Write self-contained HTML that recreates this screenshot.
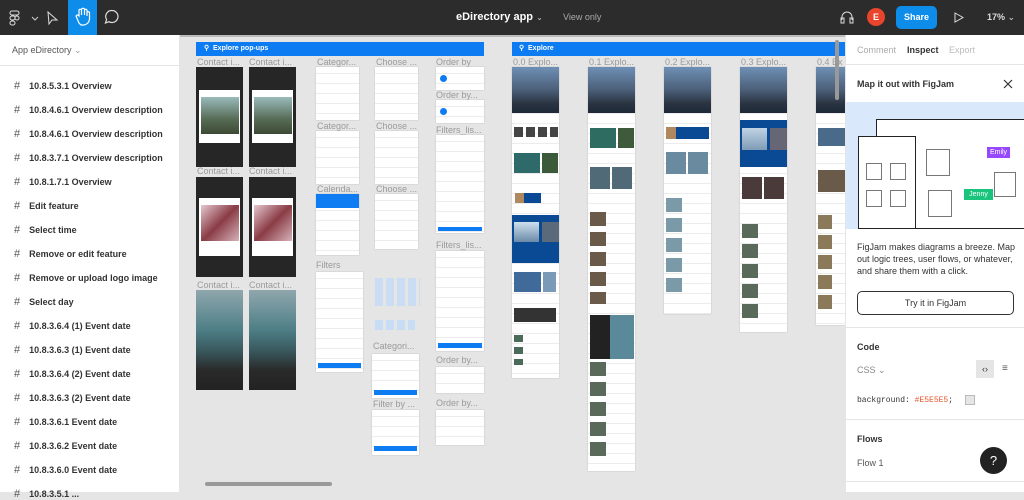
<!DOCTYPE html><html><head><meta charset="utf-8"><style>
*{margin:0;padding:0;box-sizing:border-box}
body{width:1024px;height:492px;overflow:hidden;font-family:"Liberation Sans",sans-serif;background:#e5e5e5;position:relative}
.a{position:absolute}
.top{left:0;top:0;width:1024px;height:35px;background:#2c2c2c}
.left{left:0;top:35px;width:180px;height:457px;background:#fff;border-right:1px solid #e5e5e5}
.right{left:845px;top:35px;width:179px;height:457px;background:#fff;border-left:1px solid #e5e5e5}
.li{position:absolute;left:14px;font-size:9px;color:#333;font-weight:bold}
.li span{color:#555;font-weight:normal;margin-right:9px;font-size:11px}
.lbl{position:absolute;font-size:9px;color:#9a9a9a;white-space:nowrap}
.fw{position:absolute;background:#fff repeating-linear-gradient(transparent 0 6px,#ececec 6px 7px,transparent 7px 10px);box-shadow:0 0 1px #aaa}
.fd{position:absolute;background:#262626}
.blue{background:#0d7cf2}
.img{position:absolute}
</style></head><body>
<div class="a top">
 <svg class="a" style="left:9px;top:10px" width="30" height="16"><rect x="1" y="1" width="9" height="4" rx="2" fill="none" stroke="#ddd"/><rect x="1" y="6" width="5" height="4" rx="2" fill="none" stroke="#ddd"/><rect x="1" y="11" width="5" height="4" rx="2" fill="none" stroke="#ddd"/><circle cx="8" cy="8" r="2" fill="none" stroke="#ddd"/><path d="M23 7l3 3 3-3" stroke="#ccc" fill="none"/></svg>
 <svg class="a" style="left:46px;top:11px" width="14" height="14"><path d="M2 1L11 9 6 9 3 13Z" fill="none" stroke="#ddd"/></svg>
 <div class="a" style="left:68px;top:0;width:29px;height:35px;background:#0d8ce9"></div>
 <svg class="a" style="left:74px;top:7px" width="18" height="20"><path d="M5 16 L2 9 Q3 7 5 9 V3 Q6 1.5 7.5 3 V8 V2 Q9 0.5 10.5 2 V8 V3 Q12 1.5 13 3 V9 V5 Q14.5 4 15.5 5.5 V12 Q15 17 10 18 H7Z" fill="none" stroke="#fff" stroke-width="1.2"/></svg>
 <svg class="a" style="left:104px;top:9px" width="16" height="16"><path d="M8 1.5a6 6 0 1 1-3 11.2L1.5 14 2.6 10.6A6 6 0 0 1 8 1.5z" fill="none" stroke="#ddd" stroke-width="1.2"/></svg>
 <div class="a" style="left:456px;top:11px;color:#fff;font-size:11px;font-weight:bold">eDirectory app <span style="font-weight:normal;font-size:8px;color:#ccc">⌄</span></div>
 <div class="a" style="left:563px;top:12px;color:#aaa;font-size:9px">View only</div>
 <svg class="a" style="left:840px;top:10px" width="14" height="14"><path d="M2 10V7a5 5 0 0 1 10 0v3" fill="none" stroke="#ddd"/><rect x="1" y="8" width="3" height="5" fill="none" stroke="#ddd"/><rect x="10" y="8" width="3" height="5" fill="none" stroke="#ddd"/></svg>
 <div class="a" style="left:867px;top:8px;width:18px;height:18px;border-radius:50%;background:#e8452c;color:#fff;font-size:9px;text-align:center;line-height:18px;font-weight:bold">E</div>
 <div class="a" style="left:896px;top:6px;width:41px;height:23px;border-radius:5px;background:#0d8ce9;color:#fff;font-size:9px;font-weight:bold;text-align:center;line-height:23px">Share</div>
 <svg class="a" style="left:954px;top:12px" width="10" height="11"><path d="M1 1L9 5.5 1 10Z" fill="none" stroke="#ddd"/></svg>
 <div class="a" style="left:987px;top:12px;color:#ddd;font-size:9px;font-weight:bold">17% <span style="font-weight:normal">⌄</span></div>
</div>
<div class="a left">
 <div class="a" style="left:12px;top:10px;font-size:9px;color:#555">App eDirectory <span style="color:#999">⌄</span></div>
 <div class="a" style="left:0;top:30px;width:180px;height:1px;background:#e5e5e5"></div>
 <div class="li" style="top:45px"><span>#</span>10.8.5.3.1 Overview</div>
 <div class="li" style="top:69px"><span>#</span>10.8.4.6.1 Overview description</div>
 <div class="li" style="top:93px"><span>#</span>10.8.4.6.1 Overview description</div>
 <div class="li" style="top:117px"><span>#</span>10.8.3.7.1 Overview description</div>
 <div class="li" style="top:141px"><span>#</span>10.8.1.7.1 Overview</div>
 <div class="li" style="top:165px"><span>#</span>Edit feature</div>
 <div class="li" style="top:189px"><span>#</span>Select time</div>
 <div class="li" style="top:213px"><span>#</span>Remove or edit feature</div>
 <div class="li" style="top:237px"><span>#</span>Remove or upload logo image</div>
 <div class="li" style="top:261px"><span>#</span>Select day</div>
 <div class="li" style="top:285px"><span>#</span>10.8.3.6.4 (1) Event date</div>
 <div class="li" style="top:309px"><span>#</span>10.8.3.6.3 (1) Event date</div>
 <div class="li" style="top:333px"><span>#</span>10.8.3.6.4 (2) Event date</div>
 <div class="li" style="top:357px"><span>#</span>10.8.3.6.3 (2) Event date</div>
 <div class="li" style="top:381px"><span>#</span>10.8.3.6.1 Event date</div>
 <div class="li" style="top:405px"><span>#</span>10.8.3.6.2 Event date</div>
 <div class="li" style="top:429px"><span>#</span>10.8.3.6.0 Event date</div>
 <div class="li" style="top:453px"><span>#</span>10.8.3.5.1 ...</div>
</div>

<div class="a" style="left:180px;top:35px;width:665px;height:2px;background:#bbb"></div>
<div class="a blue" style="left:196px;top:42px;width:288px;height:14px"></div>
<div class="a" style="left:204px;top:44px;font-size:7px;color:#fff;font-weight:bold">⚲ &nbsp;Explore pop-ups</div>
<div class="a blue" style="left:512px;top:42px;width:333px;height:14px"></div>
<div class="a" style="left:519px;top:44px;font-size:7px;color:#fff;font-weight:bold">⚲ &nbsp;Explore</div>

<div class="lbl" style="left:197px;top:57px">Contact i...</div><div class="lbl" style="left:249px;top:57px">Contact i...</div>
<div class="lbl" style="left:197px;top:166px">Contact i...</div><div class="lbl" style="left:249px;top:166px">Contact i...</div>
<div class="lbl" style="left:197px;top:280px">Contact i...</div><div class="lbl" style="left:249px;top:280px">Contact i...</div>
<div class="lbl" style="left:317px;top:57px">Categor...</div><div class="lbl" style="left:376px;top:57px">Choose ...</div><div class="lbl" style="left:436px;top:57px">Order by</div>
<div class="lbl" style="left:317px;top:121px">Categor...</div><div class="lbl" style="left:376px;top:121px">Choose ...</div><div class="lbl" style="left:436px;top:90px">Order by...</div>
<div class="lbl" style="left:317px;top:184px">Calenda...</div><div class="lbl" style="left:376px;top:184px">Choose ...</div><div class="lbl" style="left:436px;top:125px">Filters_lis...</div>
<div class="lbl" style="left:316px;top:260px">Filters</div><div class="lbl" style="left:436px;top:240px">Filters_lis...</div>
<div class="lbl" style="left:373px;top:341px">Categori...</div><div class="lbl" style="left:373px;top:399px">Filter by ...</div>
<div class="lbl" style="left:436px;top:355px">Order by...</div><div class="lbl" style="left:436px;top:398px">Order by...</div>
<div class="lbl" style="left:513px;top:57px">0.0 Explo...</div><div class="lbl" style="left:589px;top:57px">0.1 Explo...</div><div class="lbl" style="left:665px;top:57px">0.2 Explo...</div><div class="lbl" style="left:741px;top:57px">0.3 Explo...</div><div class="lbl" style="left:817px;top:57px">0.4 Ex</div>

<div class="fd" style="left:196px;top:67px;width:47px;height:100px"></div><div class="fd" style="left:249px;top:67px;width:47px;height:100px"></div>
<div class="a" style="left:199px;top:90px;width:41px;height:53px;background:#fff"></div><div class="a" style="left:252px;top:90px;width:41px;height:53px;background:#fff"></div>
<div class="img" style="left:201px;top:97px;width:38px;height:37px;background:linear-gradient(#9bb 0%,#576b55 60%,#3c4a35)"></div><div class="img" style="left:254px;top:97px;width:38px;height:37px;background:linear-gradient(#9bb 0%,#576b55 60%,#3c4a35)"></div>
<div class="fd" style="left:196px;top:177px;width:47px;height:100px"></div><div class="fd" style="left:249px;top:177px;width:47px;height:100px"></div>
<div class="a" style="left:199px;top:198px;width:41px;height:58px;background:#fff"></div><div class="a" style="left:252px;top:198px;width:41px;height:58px;background:#fff"></div>
<div class="img" style="left:201px;top:205px;width:38px;height:36px;background:linear-gradient(135deg,#e6c7cf,#8a3c45 50%,#d7b2ba)"></div><div class="img" style="left:254px;top:205px;width:38px;height:36px;background:linear-gradient(135deg,#e6c7cf,#8a3c45 50%,#d7b2ba)"></div>
<div class="img" style="left:196px;top:290px;width:47px;height:100px;background:linear-gradient(#8fa7ad,#4e7e86 40%,#3a5a5f 60%,#2a2a2a 80%,#222)"></div><div class="img" style="left:249px;top:290px;width:47px;height:100px;background:linear-gradient(#8fa7ad,#4e7e86 40%,#3a5a5f 60%,#2a2a2a 80%,#222)"></div>

<div class="fw" style="left:316px;top:67px;width:43px;height:53px"></div>
<div class="fw" style="left:316px;top:131px;width:43px;height:53px"></div>
<div class="fw" style="left:316px;top:194px;width:43px;height:61px"></div><div class="a blue" style="left:316px;top:194px;width:43px;height:14px"></div>
<div class="fw" style="left:316px;top:272px;width:47px;height:100px"></div><div class="a blue" style="left:318px;top:363px;width:43px;height:5px"></div>
<div class="fw" style="left:375px;top:67px;width:43px;height:53px"></div>
<div class="fw" style="left:375px;top:131px;width:43px;height:53px"></div>
<div class="fw" style="left:375px;top:194px;width:43px;height:55px"></div>
<div class="fw" style="left:436px;top:67px;width:48px;height:23px"></div><div class="a blue" style="left:440px;top:75px;width:7px;height:7px;border-radius:50%"></div>
<div class="fw" style="left:436px;top:100px;width:48px;height:23px"></div><div class="a blue" style="left:440px;top:108px;width:7px;height:7px;border-radius:50%"></div>
<div class="fw" style="left:436px;top:135px;width:48px;height:98px"></div><div class="a blue" style="left:438px;top:227px;width:44px;height:4px"></div>
<div class="fw" style="left:436px;top:251px;width:48px;height:100px"></div><div class="a blue" style="left:438px;top:343px;width:44px;height:5px"></div>
<div class="fw" style="left:436px;top:367px;width:48px;height:26px"></div>
<div class="fw" style="left:436px;top:410px;width:48px;height:35px"></div>
<div class="fw" style="left:372px;top:354px;width:47px;height:44px"></div><div class="a blue" style="left:374px;top:390px;width:43px;height:5px"></div>
<div class="fw" style="left:372px;top:410px;width:47px;height:45px"></div><div class="a blue" style="left:374px;top:446px;width:43px;height:5px"></div>
<div class="a" style="left:375px;top:278px;width:45px;height:28px;background:repeating-linear-gradient(90deg,#c7dcf5 0 8px,transparent 8px 11px);opacity:.9"></div>
<div class="a" style="left:375px;top:320px;width:40px;height:10px;background:repeating-linear-gradient(90deg,#c7dcf5 0 8px,transparent 8px 11px)"></div>

<div class="fw" style="left:512px;top:67px;width:47px;height:311px"></div>
<div class="fw" style="left:588px;top:67px;width:47px;height:404px"></div>
<div class="fw" style="left:664px;top:67px;width:47px;height:247px"></div>
<div class="fw" style="left:740px;top:67px;width:47px;height:265px"></div>
<div class="fw" style="left:816px;top:67px;width:29px;height:258px"></div>
<div class="img" style="left:512px;top:67px;width:47px;height:46px;background:linear-gradient(#6e8fb5,#4b5f78 50%,#2a3340 80%,#1d2a3a)"></div>
<div class="img" style="left:588px;top:67px;width:47px;height:46px;background:linear-gradient(#6e8fb5,#4b5f78 50%,#2a3340 80%,#1d2a3a)"></div>
<div class="img" style="left:664px;top:67px;width:47px;height:46px;background:linear-gradient(#6e8fb5,#4b5f78 50%,#2a3340 80%,#1d2a3a)"></div>
<div class="img" style="left:740px;top:67px;width:47px;height:46px;background:linear-gradient(#6e8fb5,#4b5f78 50%,#2a3340 80%,#1d2a3a)"></div>
<div class="img" style="left:816px;top:67px;width:29px;height:46px;background:linear-gradient(#6e8fb5,#4b5f78 50%,#2a3340 80%,#1d2a3a)"></div>
<div class="img" style="left:514px;top:127px;width:44px;height:10px;background:repeating-linear-gradient(90deg,#444 0 9px,transparent 9px 12px)"></div>
<div class="img" style="left:514px;top:153px;width:44px;height:20px;background:linear-gradient(90deg,#2f6a6a 0 26px,transparent 26px 28px,#3a5a3a 28px)"></div>
<div class="a" style="left:515px;top:193px;width:26px;height:10px;background:#0a4a94"></div><div class="img" style="left:515px;top:193px;width:9px;height:10px;background:#b08860"></div>
<div class="a" style="left:512px;top:215px;width:47px;height:48px;background:#0a4a94"></div>
<div class="img" style="left:514px;top:222px;width:25px;height:20px;background:linear-gradient(#cfe0ee,#6a8aa8)"></div><div class="img" style="left:542px;top:222px;width:17px;height:20px;background:#5a6a7a"></div>
<div class="img" style="left:514px;top:272px;width:42px;height:20px;background:linear-gradient(90deg,#3f6a9a 0 27px,transparent 27px 29px,#7a9ab8 29px)"></div>
<div class="img" style="left:514px;top:308px;width:42px;height:14px;background:#333"></div>
<div class="img" style="left:514px;top:335px;width:9px;height:30px;background:repeating-linear-gradient(#4a6a5a 0 7px,transparent 7px 12px)"></div>
<div class="img" style="left:590px;top:128px;width:44px;height:20px;background:linear-gradient(90deg,#2e6b60 0 26px,transparent 26px 28px,#3e5a3a 28px)"></div>
<div class="img" style="left:590px;top:167px;width:43px;height:22px;background:repeating-linear-gradient(90deg,#506a78 0 20px,transparent 20px 22px)"></div>
<div class="img" style="left:590px;top:212px;width:16px;height:92px;background:repeating-linear-gradient(#6a5a4a 0 14px,transparent 14px 20px)"></div>
<div class="img" style="left:590px;top:315px;width:44px;height:44px;background:linear-gradient(90deg,#222 0 20px,#5a8a9a 20px)"></div>
<div class="img" style="left:590px;top:362px;width:16px;height:96px;background:repeating-linear-gradient(#5a6a5a 0 14px,transparent 14px 20px)"></div>
<div class="img" style="left:666px;top:127px;width:43px;height:12px;background:linear-gradient(90deg,#b08860 0 10px,#0a4a94 10px)"></div>
<div class="img" style="left:666px;top:152px;width:43px;height:22px;background:repeating-linear-gradient(90deg,#6a8aa0 0 20px,transparent 20px 22px)"></div>
<div class="img" style="left:666px;top:198px;width:16px;height:100px;background:repeating-linear-gradient(#7a9aa8 0 14px,transparent 14px 20px)"></div>
<div class="a" style="left:740px;top:120px;width:47px;height:47px;background:#0a4a94"></div>
<div class="img" style="left:742px;top:128px;width:25px;height:22px;background:linear-gradient(#bfd3e3,#7f9bb5)"></div><div class="img" style="left:770px;top:128px;width:17px;height:22px;background:#667"></div>
<div class="img" style="left:742px;top:177px;width:43px;height:22px;background:repeating-linear-gradient(90deg,#4a3a3a 0 20px,transparent 20px 22px)"></div>
<div class="img" style="left:742px;top:224px;width:16px;height:96px;background:repeating-linear-gradient(#5a6a5a 0 14px,transparent 14px 20px)"></div>
<div class="img" style="left:818px;top:128px;width:27px;height:18px;background:#4a6a8a"></div>
<div class="img" style="left:818px;top:170px;width:27px;height:22px;background:#6a5a4a"></div>
<div class="img" style="left:818px;top:215px;width:14px;height:100px;background:repeating-linear-gradient(#8a7a5a 0 14px,transparent 14px 20px)"></div>
<div class="a" style="left:835px;top:40px;width:4px;height:60px;background:#999;border-radius:2px"></div>
<div class="a" style="left:205px;top:482px;width:127px;height:4px;background:#999;border-radius:2px"></div>

<div class="a right">
 <div class="a" style="left:11px;top:10px;font-size:9px;color:#aaa">Comment</div>
 <div class="a" style="left:61px;top:10px;font-size:9px;color:#333;font-weight:bold">Inspect</div>
 <div class="a" style="left:103px;top:10px;font-size:9px;color:#bbb">Export</div>
 <div class="a" style="left:0;top:29px;width:179px;height:1px;background:#e5e5e5"></div>
 <div class="a" style="left:11px;top:44px;font-size:9px;color:#333;font-weight:bold">Map it out with FigJam</div>
 <svg class="a" style="left:157px;top:44px" width="10" height="10"><path d="M1 1L9 9M9 1L1 9" stroke="#333" stroke-width="1.2"/></svg>
 <div class="a" style="left:0;top:67px;width:179px;height:127px;background:#d9e8fb"></div>
 <div class="a" style="left:30px;top:84px;width:149px;height:110px;background:#fff;border:1px solid #222;border-right:none"></div>
 <div class="a" style="left:12px;top:101px;width:58px;height:93px;background:#fff;border:1px solid #222"></div>
 <div class="a" style="left:20px;top:128px;width:16px;height:17px;border:1px solid #777;background:#fff"></div>
 <div class="a" style="left:44px;top:128px;width:16px;height:17px;border:1px solid #777;background:#fff"></div>
 <div class="a" style="left:20px;top:155px;width:16px;height:17px;border:1px solid #777;background:#fff"></div>
 <div class="a" style="left:44px;top:155px;width:16px;height:17px;border:1px solid #777;background:#fff"></div>
 <div class="a" style="left:80px;top:114px;width:24px;height:27px;border:1px solid #777;background:#fff"></div>
 <div class="a" style="left:82px;top:155px;width:24px;height:27px;border:1px solid #777;background:#fff"></div>
 <div class="a" style="left:148px;top:137px;width:22px;height:25px;border:1px solid #777;background:#fff"></div>
 <div class="a" style="left:141px;top:112px;width:23px;height:11px;background:#9747ff;color:#fff;font-size:7px;text-align:center;line-height:11px">Emily</div>
 <div class="a" style="left:118px;top:154px;width:29px;height:11px;background:#1bc47d;color:#fff;font-size:7px;text-align:center;line-height:11px">Jenny</div>
 <div class="a" style="left:11px;top:206px;width:160px;font-size:9px;color:#333;line-height:12px">FigJam makes diagrams a breeze. Map out logic trees, user flows, or whatever, and share them with a click.</div>
 <div class="a" style="left:11px;top:256px;width:157px;height:24px;border:1px solid #333;border-radius:5px;font-size:9px;color:#333;text-align:center;line-height:22px">Try it in FigJam</div>
 <div class="a" style="left:0;top:292px;width:179px;height:1px;background:#e5e5e5"></div>
 <div class="a" style="left:11px;top:307px;font-size:9px;color:#333;font-weight:bold">Code</div>
 <div class="a" style="left:11px;top:330px;font-size:9px;color:#888">CSS ⌄</div>
 <div class="a" style="left:130px;top:325px;width:18px;height:18px;background:#e5e5e5;font-size:9px;text-align:center;line-height:18px;color:#333">‹›</div>
 <div class="a" style="left:156px;top:330px;font-size:10px;color:#555;line-height:8px">≡</div>
 <div class="a" style="left:11px;top:361px;font-family:'Liberation Mono',monospace;font-size:8px;color:#333">background: <span style="color:#e8562c">#E5E5E5</span>;</div>
 <div class="a" style="left:119px;top:360px;width:10px;height:10px;background:#e5e5e5;border:1px solid #bbb"></div>
 <div class="a" style="left:0;top:384px;width:179px;height:1px;background:#e5e5e5"></div>
 <div class="a" style="left:11px;top:399px;font-size:9px;color:#333;font-weight:bold">Flows</div>
 <div class="a" style="left:11px;top:423px;font-size:9px;color:#555">Flow 1</div>
 <div class="a" style="left:134px;top:412px;width:27px;height:27px;border-radius:50%;background:#222;color:#fff;font-size:13px;text-align:center;line-height:27px">?</div>
 <div class="a" style="left:0;top:446px;width:179px;height:1px;background:#e5e5e5"></div>
</div>
</body></html>
